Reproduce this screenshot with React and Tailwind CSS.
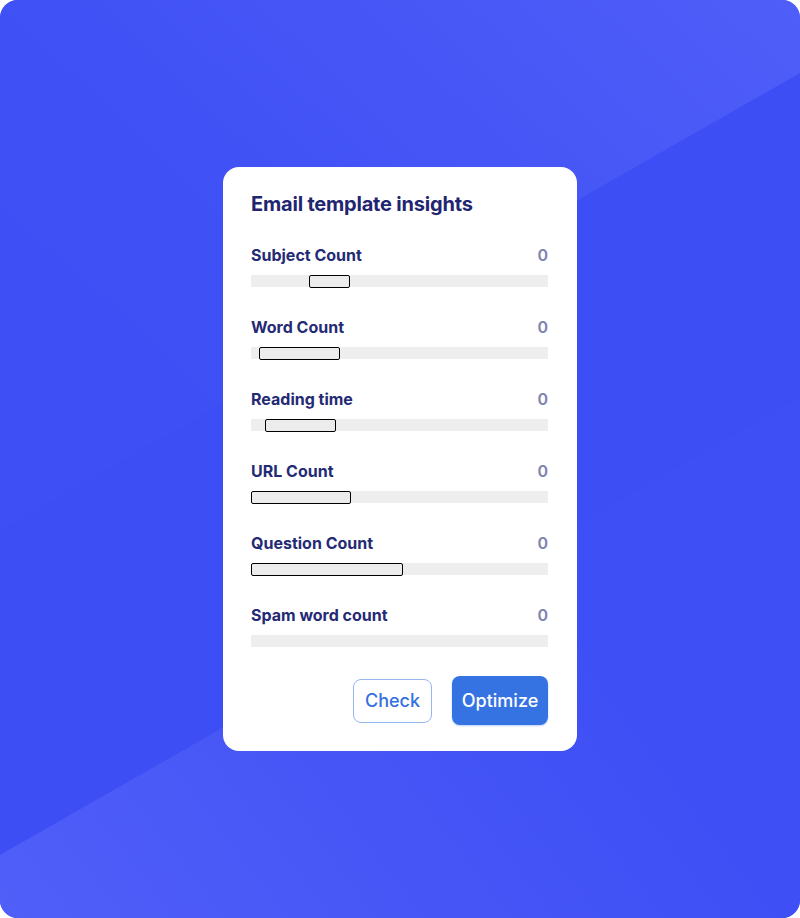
import React from "react";

const metrics = [
  { label: "Subject Count", value: 0, knob: "left-[58px] w-[41px]" },
  { label: "Word Count", value: 0, knob: "left-[8px] w-[81px]" },
  { label: "Reading time", value: 0, knob: "left-[14px] w-[71px]" },
  { label: "URL Count", value: 0, knob: "left-0 w-[100px]" },
  { label: "Question Count", value: 0, knob: "left-0 w-[152px]" },
  { label: "Spam word count", value: 0, knob: null },
];

const Backdrop = () => (
  <svg
    className="absolute inset-0 w-full h-full"
    viewBox="0 0 800 918"
    preserveAspectRatio="none"
  >
    <defs>
      <linearGradient id="topGlow" x1="0" y1="0.7" x2="1" y2="0">
        <stop offset="0" stopColor="#3e4ff5" />
        <stop offset="0.3" stopColor="#3f50f5" />
        <stop offset="1" stopColor="#4f5ef8" />
      </linearGradient>
      <linearGradient id="bottomGlow" x1="0" y1="1" x2="1" y2="0.5">
        <stop offset="0" stopColor="#505ff8" />
        <stop offset="0.8" stopColor="#3e4ff5" />
      </linearGradient>
    </defs>
    <rect width="800" height="918" fill="#3e4ef5" />
    <polygon points="0,0 800,0 800,73 0,530" fill="url(#topGlow)" />
    <polygon points="0,855 800,398 800,918 0,918" fill="url(#bottomGlow)" />
  </svg>
);

const MetricRow = ({ label, value, knob }) => (
  <div className="flex flex-col">
    <div className="flex items-center justify-between h-6">
      <span className="text-[16px] font-bold text-[#242a74]">{label}</span>
      <span className="text-[16px] font-semibold text-[#7c81b1]">{value}</span>
    </div>
    {/* track + marker */}
    <div className="relative mt-2 h-3 bg-[#eeeeee]">
      {knob && (
        <div
          className={`absolute top-0 h-[13px] border-[1.5px] border-black rounded-[2px] bg-[#ececec] ${knob}`}
        />
      )}
    </div>
  </div>
);

export default function App() {
  return (
    <div className="w-[800px] h-[918px] bg-white">
      <div
        className="relative w-[800px] h-[918px] rounded-[18px] overflow-hidden flex items-center justify-center"
        style={{ fontFamily: "Inter, 'Noto Sans', sans-serif" }}
      >
        <Backdrop />

        <div className="relative w-[354px] h-[584px] bg-white rounded-[16px] pl-7 pr-[29px] pt-[23px] pb-[26px] flex flex-col">
          <h2 className="text-[20px] leading-7 font-bold text-[#1f2570] tracking-[-0.2px]">
            Email template insights
          </h2>

          <div className="mt-[25px] flex flex-col gap-7">
            {metrics.map((m) => (
              <MetricRow key={m.label} {...m} />
            ))}
          </div>

          <div className="mt-auto flex items-center justify-end gap-5">
            <button className="h-11 w-[79px] rounded-lg border border-[#96b6f1] bg-white text-[18px] font-medium text-[#3570e0]">
              Check
            </button>
            <button className="h-[49px] w-[96px] rounded-lg bg-[#3573e2] text-[18px] font-medium text-white shadow-[0_1px_2px_rgba(53,115,226,0.35)]">
              Optimize
            </button>
          </div>
        </div>
      </div>
    </div>
  );
}
